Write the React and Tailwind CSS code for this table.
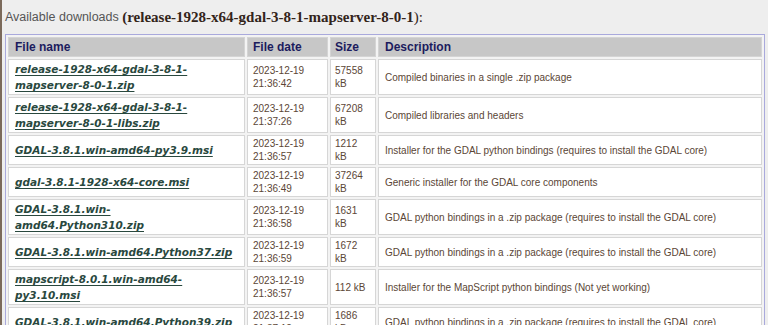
const rows = [
  {
    name: "release-1928-x64-gdal-3-8-1-mapserver-8-0-1.zip",
    date: "2023-12-19",
    time: "21:36:42",
    size: "57558 kB",
    desc: "Compiled binaries in a single .zip package",
  },
  {
    name: "release-1928-x64-gdal-3-8-1-mapserver-8-0-1-libs.zip",
    date: "2023-12-19",
    time: "21:37:26",
    size: "67208 kB",
    desc: "Compiled libraries and headers",
  },
  {
    name: "GDAL-3.8.1.win-amd64-py3.9.msi",
    date: "2023-12-19",
    time: "21:36:57",
    size: "1212 kB",
    desc: "Installer for the GDAL python bindings (requires to install the GDAL core)",
  },
  {
    name: "gdal-3.8.1-1928-x64-core.msi",
    date: "2023-12-19",
    time: "21:36:49",
    size: "37264 kB",
    desc: "Generic installer for the GDAL core components",
  },
  {
    name: "GDAL-3.8.1.win-amd64.Python310.zip",
    date: "2023-12-19",
    time: "21:36:58",
    size: "1631 kB",
    desc: "GDAL python bindings in a .zip package (requires to install the GDAL core)",
  },
  {
    name: "GDAL-3.8.1.win-amd64.Python37.zip",
    date: "2023-12-19",
    time: "21:36:59",
    size: "1672 kB",
    desc: "GDAL python bindings in a .zip package (requires to install the GDAL core)",
  },
  {
    name: "mapscript-8.0.1.win-amd64-py3.10.msi",
    date: "2023-12-19",
    time: "21:36:57",
    size: "112 kB",
    desc: "Installer for the MapScript python bindings (Not yet working)",
  },
  {
    name: "GDAL-3.8.1.win-amd64.Python39.zip",
    date: "2023-12-19",
    time: "21:37:12",
    size: "1686 kB",
    desc: "GDAL python bindings in a .zip package (requires to install the GDAL core)",
  },
];

const cell = "bg-white border border-[#d6d6d6] align-middle py-px";
const small = "font-['Liberation_Sans',Arial,sans-serif] text-[10px] leading-[13px] text-[#5b4636]";

export default function App() {
  return (
    <div className="h-[325px] w-[768px] overflow-hidden bg-[#eeeeee] border-l-2 border-[#7b6a5b] pl-[3px]">
      {/* Title */}
      <div className="flex h-[34px] items-center">
        <span className="font-['Liberation_Sans',Arial,sans-serif] text-[12.5px] text-[#555555]">
          Available downloads&nbsp;
        </span>
        <span className="font-['Liberation_Serif','Times_New_Roman',serif] text-[15px] font-bold text-[#33241a]">
          (release-1928-x64-gdal-3-8-1-mapserver-8-0-1
        </span>
        <span className="font-['Liberation_Serif','Times_New_Roman',serif] text-[15px] text-[#33241a]">):</span>
      </div>

      {/* Downloads table */}
      <table className="w-[760px] table-fixed border-separate border-spacing-[2px] border border-[#a9a9dc] bg-[#f3f3f3]">
        <thead>
          <tr className="font-['Liberation_Sans',Arial,sans-serif] text-[12px] font-bold text-[#1c1c5e]">
            <th className="w-[237px] h-[20px] border border-[#d4d4d4] bg-[#c7c7c7] px-[6px] text-left">File name</th>
            <th className="w-[81px] border border-[#d4d4d4] bg-[#c7c7c7] px-[5px] text-left">File date</th>
            <th className="w-[46px] border border-[#d4d4d4] bg-[#c7c7c7] px-[4px] text-left">Size</th>
            <th className="border border-[#d4d4d4] bg-[#c7c7c7] px-[6px] text-left">Description</th>
          </tr>
        </thead>
        <tbody>
          {rows.map((r) => (
            <tr key={r.name}>
              <td
                className={`${cell} pl-[6px] pr-[10px] font-['DejaVu_Sans',Verdana,sans-serif] text-[10.5px] font-bold italic leading-[16px] text-[#29483e]`}
              >
                <a href="#" className="underline underline-offset-2">
                  {r.name}
                </a>
              </td>
              <td className={`${cell} ${small} px-[5px]`}>
                {r.date}
                <br />
                {r.time}
              </td>
              <td className={`${cell} ${small} px-[4px]`}>{r.size}</td>
              <td className={`${cell} ${small} px-[6px]`}>{r.desc}</td>
            </tr>
          ))}
        </tbody>
      </table>
    </div>
  );
}
